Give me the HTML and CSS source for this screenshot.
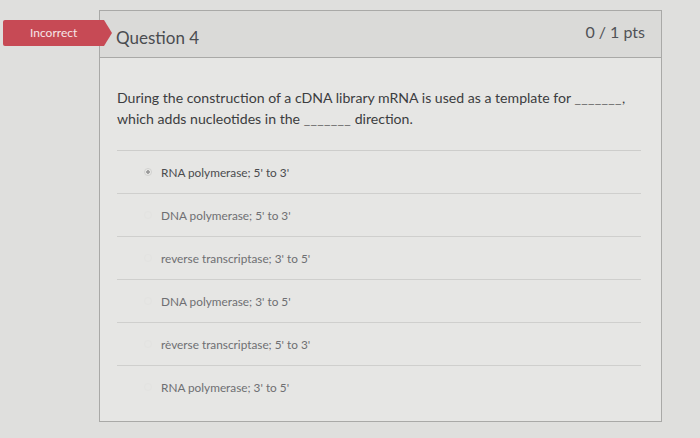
FILE: index.html
```html
<!DOCTYPE html>
<html>
<head>
<meta charset="utf-8">
<link rel="stylesheet" href="styles.css">
</head>
<body>
<div class="page">
  <div class="badge">Incorrect</div>
  <div class="card">
    <div class="card-header">
      <span class="title">Question 4</span>
      <span class="pts">0 / 1 pts</span>
    </div>
    <div class="card-body">
      <p class="question">During the construction of a cDNA library mRNA is used as a template for <span class="blank">_______</span>,<br>which adds nucleotides in the <span class="blank">_______</span> direction.</p>
      <div class="answers">
        <div class="answer first"><span class="radio"></span><span class="label">RNA polymerase; 5' to 3'</span></div>
        <div class="answer"><span class="radio empty"></span><span class="label">DNA polymerase; 5' to 3'</span></div>
        <div class="answer"><span class="radio empty"></span><span class="label">reverse transcriptase; 3' to 5'</span></div>
        <div class="answer"><span class="radio empty"></span><span class="label">DNA polymerase; 3' to 5'</span></div>
        <div class="answer"><span class="radio empty"></span><span class="label">rèverse transcriptase; 5' to 3'</span></div>
        <div class="answer last"><span class="radio empty"></span><span class="label">RNA polymerase; 3' to 5'</span></div>
      </div>
    </div>
  </div>
</div>
</body>
</html>
```

FILE: styles.css
```css
html, body {
  margin: 0;
  padding: 0;
}
body {
  width: 700px;
  height: 438px;
  overflow: hidden;
  background: #dfdfdd;
  font-family: Lato, "Liberation Sans", sans-serif;
}
.page {
  position: relative;
  padding: 10px 38px 0 99px;
}
.badge {
  position: absolute;
  left: 3px;
  top: 20px;
  width: 101px;
  height: 26px;
  background: #c74a55;
  color: #f6e6e8;
  font-size: 12px;
  line-height: 26px;
  text-indent: 27px;
  border-radius: 2px 0 0 2px;
}
.badge::after {
  content: "";
  position: absolute;
  right: -8px;
  top: 0;
  border-top: 13px solid transparent;
  border-bottom: 13px solid transparent;
  border-left: 8px solid #c74a55;
}
.card {
  height: 412px;
  border: 1px solid #a9a9a7;
  background: #e6e6e4;
  box-sizing: border-box;
}
.card-header {
  height: 46px;
  background: #dadad8;
  border-bottom: 1px solid #a9a9a7;
  display: flex;
  justify-content: space-between;
  align-items: center;
  padding: 0 16px 0 16px;
}
.title {
  font-size: 17px;
  color: #4a4c50;
  margin-top: 7px;
}
.pts {
  font-size: 16px;
  color: #505256;
  margin-top: -5px;
}
.card-body {
  padding: 29px 20px 0 17px;
}
.question {
  margin: 0;
  font-size: 14.1px;
  line-height: 21px;
  color: #3c3d40;
}
.blank {
  color: #6a6a6a;
  letter-spacing: 0.3px;
}
.answers {
  margin-top: 21px;
  border-top: 1px solid #cdcdcb;
}
.answer {
  height: 42px;
  display: flex;
  align-items: center;
  border-bottom: 1px solid #cfcfcd;
  padding-left: 27px;
}
.answer.last {
  border-bottom: none;
}
.radio {
  width: 8px;
  height: 8px;
  border-radius: 50%;
  margin-right: 9px;
  box-sizing: border-box;
  border: 1px solid #d2d2d0;
  background: radial-gradient(circle, #9a9a9a 0 1.5px, #e9e9e7 2px);
}
.radio.empty {
  border-color: #e3e3e1;
  background: transparent;
}
.label {
  font-size: 11.8px;
  color: #4a4b4e;
}
.answer:not(.first) .label {
  color: #6e6f72;
}
```
